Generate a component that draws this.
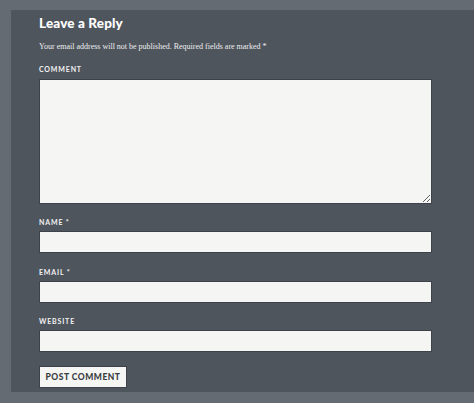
export default function App() {
  const label = "block text-[7px] font-bold tracking-[0.12em] text-[#f2f2f2] leading-none";
  const field = "mt-[5px] block w-full h-[22px] bg-[#f5f5f4] border border-[#3e434a]";
  const sans = { fontFamily: "Lato, 'Open Sans', sans-serif" };
  return (
    <div className="w-[474px] h-[403px] bg-[#646b73] pt-[10px] pl-[11px] overflow-hidden" style={sans}>
      <div className="h-[382px] bg-[#4f555d] pl-[28px] pr-[42px] pt-[3px]">
        <h3 className="text-[13.5px] font-black text-white leading-[20px] tracking-[0.01em]">Leave a Reply</h3>
        <p className="mt-[9px] text-[8px] text-[#eeeeee] leading-[10px]" style={{ fontFamily: "'Liberation Serif', serif" }}>
          Your email address will not be published. Required fields are marked *
        </p>
        <label className={label + " mt-[14px]"}>COMMENT</label>
        <textarea className="mt-[6px] block w-full h-[125px] bg-[#f5f5f4] border border-[#3e434a] resize-y" />
        <label className={label + " mt-[15px]"}>NAME *</label>
        <input className={field} />
        <label className={label + " mt-[16px]"}>EMAIL *</label>
        <input className={field} />
        <label className={label + " mt-[15px]"}>WEBSITE</label>
        <input className={field} />
        <button className="mt-[14px] block w-[88px] h-[22px] bg-[#f5f5f4] border border-[#3e434a] text-[8.5px] font-black tracking-[0.06em] text-[#3a3d42] leading-none">
          POST COMMENT
        </button>
      </div>
    </div>
  );
}
